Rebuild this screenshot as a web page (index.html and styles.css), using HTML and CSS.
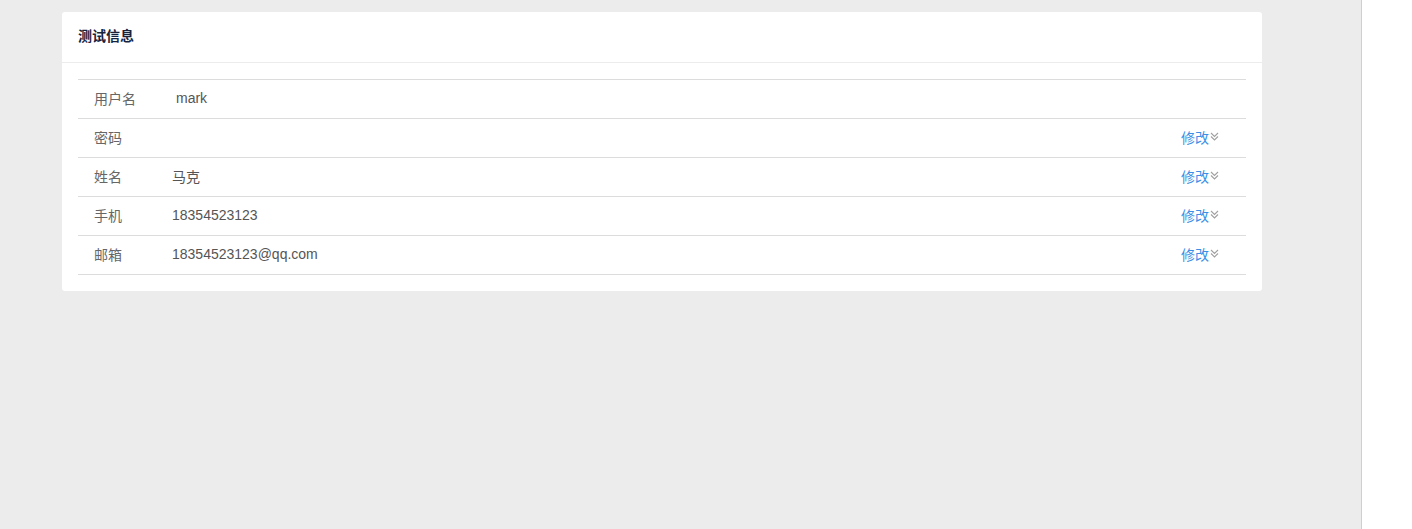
FILE: index.html
```html
<!DOCTYPE html>
<html lang="zh-CN">
<head>
    <meta charset="UTF-8">
    <meta name="viewport" content="width=device-width, initial-scale=1.0">
    <title>测试信息</title>
    <link rel="stylesheet" href="styles.css">
</head>
<body>
    <div class="layout">
        <div class="main">
            <div class="card">
                <div class="card-header">测试信息</div>
                <div class="card-body">
                    <table class="info-table">
                        <tr>
                            <td class="label">用户名</td>
                            <td class="value value-pad">mark</td>
                            <td class="action"></td>
                        </tr>
                        <tr>
                            <td class="label">密码</td>
                            <td class="value"></td>
                            <td class="action"><a href="#" class="edit-link">修改<svg class="chevrons" width="9" height="10" viewBox="0 0 9 10"><path d="M1 1 L4.5 4.5 L8 1 M1 4.5 L4.5 8 L8 4.5" fill="none" stroke="#a0a0a0" stroke-width="1.1"/></svg></a></td>
                        </tr>
                        <tr>
                            <td class="label">姓名</td>
                            <td class="value">马克</td>
                            <td class="action"><a href="#" class="edit-link">修改<svg class="chevrons" width="9" height="10" viewBox="0 0 9 10"><path d="M1 1 L4.5 4.5 L8 1 M1 4.5 L4.5 8 L8 4.5" fill="none" stroke="#a0a0a0" stroke-width="1.1"/></svg></a></td>
                        </tr>
                        <tr>
                            <td class="label">手机</td>
                            <td class="value">18354523123</td>
                            <td class="action"><a href="#" class="edit-link">修改<svg class="chevrons" width="9" height="10" viewBox="0 0 9 10"><path d="M1 1 L4.5 4.5 L8 1 M1 4.5 L4.5 8 L8 4.5" fill="none" stroke="#a0a0a0" stroke-width="1.1"/></svg></a></td>
                        </tr>
                        <tr>
                            <td class="label">邮箱</td>
                            <td class="value">18354523123@qq.com</td>
                            <td class="action"><a href="#" class="edit-link">修改<svg class="chevrons" width="9" height="10" viewBox="0 0 9 10"><path d="M1 1 L4.5 4.5 L8 1 M1 4.5 L4.5 8 L8 4.5" fill="none" stroke="#a0a0a0" stroke-width="1.1"/></svg></a></td>
                        </tr>
                    </table>
                </div>
            </div>
        </div>
        <div class="side"></div>
    </div>
</body>
</html>
```

FILE: styles.css
```css
body {
    margin: 0;
    padding: 0;
    font-family: "Liberation Sans", "Noto Sans CJK SC", sans-serif;
    font-size: 14px;
    color: #666;
}

.layout {
    display: flex;
    height: 100vh;
}

.main {
    width: 1361px;
    background-color: #ececec;
    padding: 12px 0 0 62px;
    box-sizing: border-box;
}

.side {
    flex: 1;
    background: white;
    border-left: 1px solid #cfcfcf;
}

.card {
    width: 1200px;
    background: white;
    border-radius: 3px;
}

.card-header {
    height: 50px;
    line-height: 48px;
    padding: 0 16px;
    font-size: 14px;
    font-weight: bold;
    color: #17233d;
    border-bottom: 1px solid #ececec;
}

.card-body {
    padding: 16px;
}

.info-table {
    width: 100%;
    border-collapse: collapse;
}

.info-table td {
    height: 36px;
    padding: 0 0 2px 0;
    border-top: 1px solid #dcdcdc;
    border-bottom: 1px solid #dcdcdc;
}

.label {
    width: 78px;
    padding-left: 16px !important;
    color: #666;
}

.value {
    color: #555;
}

.value-pad {
    padding-left: 4px !important;
}

.action {
    width: 65px;
    text-align: left;
}

.edit-link {
    color: #3b8fe6;
    text-decoration: none;
}

.chevrons {
    margin-left: 1px;
    vertical-align: 1px;
}
```
